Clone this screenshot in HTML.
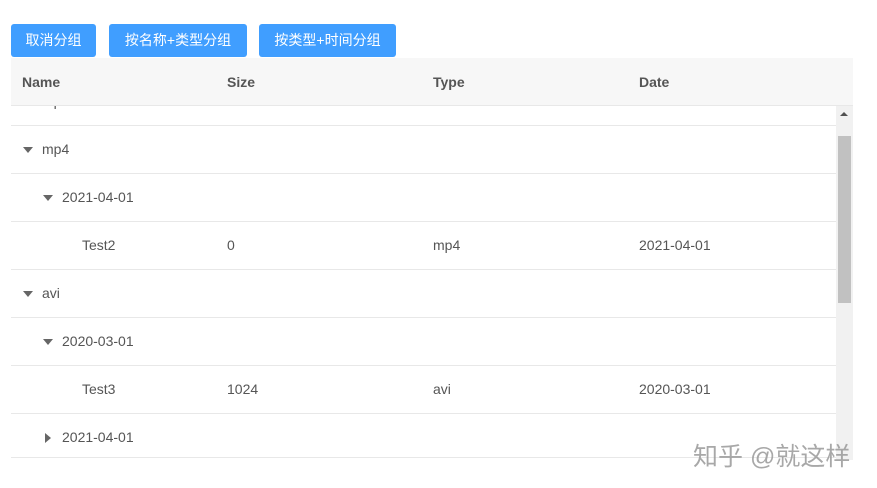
<!DOCTYPE html>
<html><head><meta charset="utf-8"><style>
body{margin:0;width:877px;height:488px;background:#fff;font-family:"Liberation Sans","Noto Sans CJK SC",sans-serif;position:relative;overflow:hidden;color:#555}
.btn{position:absolute;top:24px;height:33px;background:#409eff;color:#fff;border-radius:3px;font-size:14px;line-height:33px;text-align:center}
.hdr{position:absolute;left:11px;top:58px;width:842px;height:47px;background:#f7f7f7;border-bottom:1px solid #e8e8e8;font-weight:bold;font-size:14px;color:#555}
.hdr span,.row span{position:absolute}
.body{position:absolute;left:11px;top:106px;width:825px;height:354px;overflow:hidden}
.inner{position:absolute;top:-28px;left:0;width:825px}
.row{position:relative;height:47px;border-bottom:1px solid #e8e8e8;font-size:14px;line-height:47px}
.tri{position:absolute;width:0;height:0;top:21px}
.down{border-left:5px solid transparent;border-right:5px solid transparent;border-top:6px solid #666}
.right{border-top:5px solid transparent;border-bottom:5px solid transparent;border-left:6px solid #666;top:19px}
.sb{position:absolute;left:836px;top:106px;width:17px;height:354px;background:#f1f1f1}
.thumb{position:absolute;left:838px;top:136px;width:13px;height:167px;background:#c1c1c1}
.wm{position:absolute;left:693px;top:437px;font-size:25px;color:#999;opacity:.85;white-space:nowrap}
</style></head><body>
<div class="btn" style="left:11px;width:85px">取消分组</div>
<div class="btn" style="left:109px;width:138px">按名称+类型分组</div>
<div class="btn" style="left:259px;width:137px">按类型+时间分组</div>
<div class="hdr"><span style="left:11px;top:16px">Name</span><span style="left:216px;top:16px">Size</span><span style="left:422px;top:16px">Type</span><span style="left:628px;top:16px">Date</span></div>
<div class="body"><div class="inner">
<div class="row"><i class="tri down" style="left:12px"></i><span style="left:31px">mp3</span></div>
<div class="row"><i class="tri down" style="left:12px"></i><span style="left:31px">mp4</span></div>
<div class="row"><i class="tri down" style="left:32px"></i><span style="left:51px">2021-04-01</span></div>
<div class="row"><span style="left:71px">Test2</span><span style="left:216px">0</span><span style="left:422px">mp4</span><span style="left:628px">2021-04-01</span></div>
<div class="row"><i class="tri down" style="left:12px"></i><span style="left:31px">avi</span></div>
<div class="row"><i class="tri down" style="left:32px"></i><span style="left:51px">2020-03-01</span></div>
<div class="row"><span style="left:71px">Test3</span><span style="left:216px">1024</span><span style="left:422px">avi</span><span style="left:628px">2020-03-01</span></div>
<div class="row" style="height:43px"><i class="tri right" style="left:34px"></i><span style="left:51px">2021-04-01</span></div>
</div></div>
<div class="sb"></div><div class="thumb"></div>
<div style="position:absolute;left:840px;top:112px;width:0;height:0;border-left:4px solid transparent;border-right:4px solid transparent;border-bottom:4px solid #505050"></div>
<div class="wm">知乎 @就这样</div>
</body></html>
